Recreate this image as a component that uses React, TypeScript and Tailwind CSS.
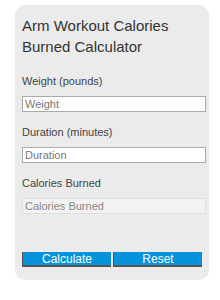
export default function App() {
  const fields = [
    { label: "Weight (pounds)", placeholder: "Weight", readOnly: false },
    { label: "Duration (minutes)", placeholder: "Duration", readOnly: false },
    { label: "Calories Burned", placeholder: "Calories Burned", readOnly: true },
  ];

  return (
    <div className="w-[220px] h-[300px] bg-white pt-[5px] pl-[15px] font-['Liberation_Sans',Arial,sans-serif]">
      <div className="w-[194px] h-[275px] bg-[#ebebeb] rounded-[10px] pt-[10px] px-[7px] flex flex-col">
        <h1 className="text-[15px] leading-[21px] text-[#333] font-normal">
          Arm Workout Calories Burned Calculator
        </h1>
        <div className="mt-[17px] flex flex-col">
          {fields.map((f) => (
            <div key={f.label} className="flex flex-col mb-[13px]">
              <label className="text-[11px] leading-[14px] text-[#444]">{f.label}</label>
              <input
                readOnly={f.readOnly}
                placeholder={f.placeholder}
                className={
                  f.readOnly
                    ? "mt-[8px] w-[184px] h-[16px] px-[2px] text-[11px] border border-[#e0e0e0] bg-[#f2f2f2] placeholder:text-[#888] outline-none"
                    : "mt-[8px] w-[184px] h-[16px] px-[2px] text-[11px] border border-[#aaa] bg-white placeholder:text-[#777] outline-none"
                }
              />
            </div>
          ))}
        </div>
        <div className="mt-[25px] flex gap-[2px]">
          <button className="w-[89px] h-[15px] bg-[#0493db] border-l border-b-2 border-[#555] text-white text-[12px] leading-[12px]">
            Calculate
          </button>
          <button className="w-[89px] h-[15px] bg-[#0493db] border-l border-b-2 border-[#555] text-white text-[12px] leading-[12px]">
            Reset
          </button>
        </div>
      </div>
    </div>
  );
}
